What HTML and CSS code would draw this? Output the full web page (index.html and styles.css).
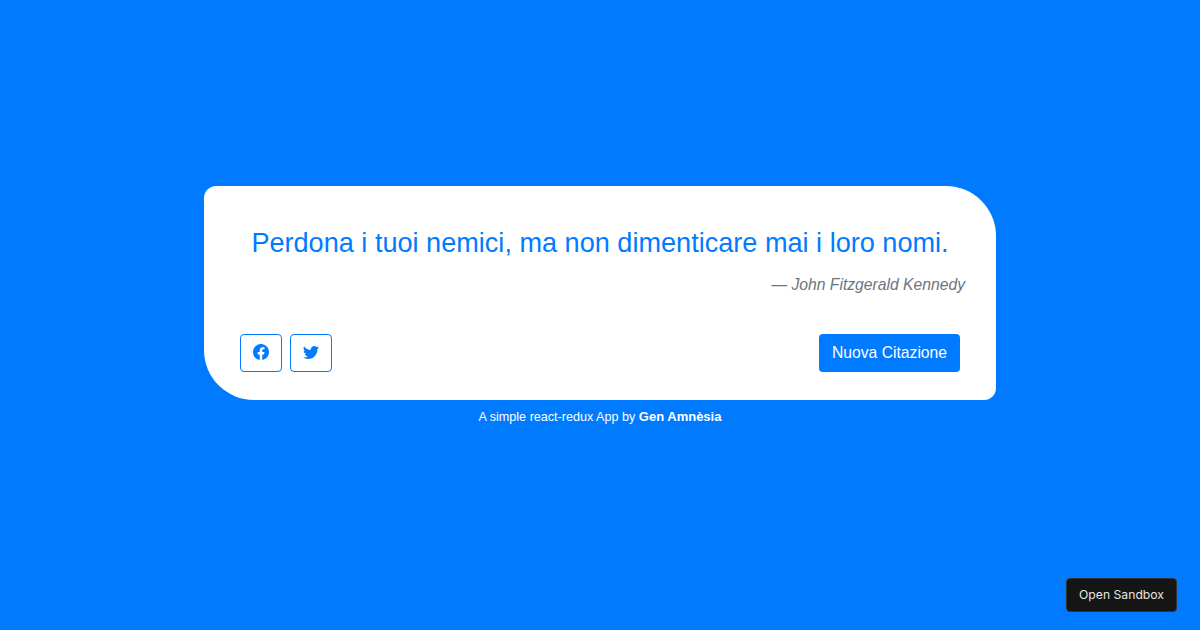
FILE: index.html
```html
<!DOCTYPE html>
<html lang="en">
<head>
    <meta charset="UTF-8">
    <meta name="viewport" content="width=device-width, initial-scale=1.0">
    <title>Random Quote Machine</title>
    <link rel="stylesheet" href="styles.css">
</head>
<body>
    <div class="page">
        <div class="quote-box">
            <p class="quote-text">Perdona i tuoi nemici, ma non dimenticare mai i loro nomi.</p>
            <p class="quote-author">— John Fitzgerald Kennedy</p>
            <div class="quote-actions">
                <div class="share-buttons">
                    <a class="share-btn" href="#" aria-label="Facebook">
                        <svg viewBox="0 0 16 16" width="16" height="16" fill="currentColor">
                            <path d="M16 8.049c0-4.446-3.582-8.05-8-8.05C3.58 0-.002 3.603-.002 8.05c0 4.017 2.926 7.347 6.75 7.951v-5.625h-2.03V8.05H6.75V6.275c0-2.017 1.195-3.131 3.022-3.131.876 0 1.791.157 1.791.157v1.98h-1.009c-.993 0-1.303.621-1.303 1.258v1.51h2.218l-.354 2.326H9.25V16c3.824-.604 6.75-3.934 6.75-7.951z"/>
                        </svg>
                    </a>
                    <a class="share-btn" href="#" aria-label="Twitter">
                        <svg viewBox="0 0 16 16" width="16" height="16" fill="currentColor">
                            <path d="M5.026 15c6.038 0 9.341-5.003 9.341-9.334 0-.14 0-.282-.006-.422A6.685 6.685 0 0 0 16 3.542a6.658 6.658 0 0 1-1.889.518 3.301 3.301 0 0 0 1.447-1.817 6.533 6.533 0 0 1-2.087.793A3.286 3.286 0 0 0 7.875 6.03a9.325 9.325 0 0 1-6.767-3.429 3.289 3.289 0 0 0 1.018 4.382A3.323 3.323 0 0 1 .64 6.575v.045a3.288 3.288 0 0 0 2.632 3.218 3.203 3.203 0 0 1-.865.115 3.23 3.23 0 0 1-.614-.057 3.283 3.283 0 0 0 3.067 2.277A6.588 6.588 0 0 1 .78 13.58a6.32 6.32 0 0 1-.78-.045A9.344 9.344 0 0 0 5.026 15z"/>
                        </svg>
                    </a>
                </div>
                <button class="new-quote-btn">Nuova Citazione</button>
            </div>
        </div>
        <div class="credits">A simple react-redux App by <strong>Gen Amnèsia</strong></div>
    </div>

    <button class="sandbox-btn">Open Sandbox</button>
</body>
</html>
```

FILE: styles.css
```css
:root {
    --primary-color: #007bff;
}

* {
    box-sizing: border-box;
}

body {
    font-family: 'Liberation Sans', Arial, sans-serif;
    background: var(--primary-color);
    color: white;
    margin: 0;
    min-height: 100vh;
}

.page {
    display: flex;
    flex-direction: column;
    align-items: center;
    padding-top: 186px;
}

.quote-box {
    width: 792px;
    height: 214px;
    padding: 36px 31px 28px 36px;
    background: white;
    border-radius: 12px 50px 12px 50px;
}

.quote-text {
    margin: 0;
    padding-right: 5px;
    color: var(--primary-color);
    font-size: 27.1px;
    line-height: 42px;
    text-align: center;
}

.quote-author {
    margin: 9px 0 0;
    color: #6c757d;
    font-size: 15.7px;
    font-style: italic;
    line-height: 24px;
    text-align: right;
}

.quote-actions {
    display: flex;
    justify-content: space-between;
    margin-top: 37px;
    padding-right: 5px;
}

.share-buttons {
    display: flex;
    gap: 8px;
}

.share-btn {
    display: flex;
    align-items: center;
    justify-content: center;
    width: 42px;
    height: 38px;
    padding-bottom: 2px;
    color: var(--primary-color);
    border: 1px solid var(--primary-color);
    border-radius: 4px;
}

.new-quote-btn {
    width: 141px;
    height: 38px;
    padding: 0;
    background: var(--primary-color);
    border: none;
    border-radius: 4px;
    color: white;
    font-family: inherit;
    font-size: 15.7px;
    cursor: pointer;
}

.credits {
    margin-top: 8px;
    font-size: 12.6px;
    line-height: 18px;
}

.credits strong {
    font-size: 13px;
}

.sandbox-btn {
    position: fixed;
    right: 23px;
    bottom: 18px;
    width: 111px;
    height: 34px;
    padding: 0 0 1px;
    background: #151515;
    border: 1px solid #333;
    border-radius: 4px;
    color: #e6e6e6;
    font-family: Inter, sans-serif;
    font-size: 12.2px;
}
```
